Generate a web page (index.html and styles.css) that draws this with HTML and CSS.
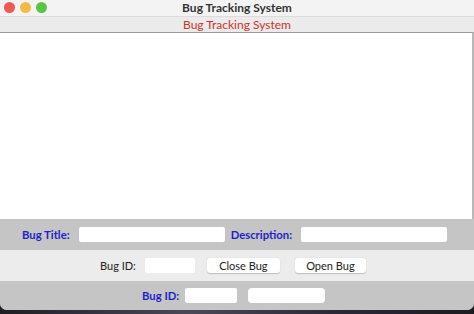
FILE: index.html
```html
<!DOCTYPE html>
<html>
<head>
<meta charset="utf-8">
<link rel="stylesheet" href="styles.css">
</head>
<body>
<div class="desk">
  <div class="window">
    <div class="titlebar">
      <div class="lights">
        <span class="light red"></span>
        <span class="light yellow"></span>
        <span class="light green"></span>
      </div>
      <div class="title">Bug Tracking System</div>
    </div>
    <div class="header">Bug Tracking System</div>
    <div class="textarea"></div>
    <div class="row row-gray row1">
      <span class="label blue">Bug Title:</span>
      <span class="field f-title"></span>
      <span class="label blue">Description:</span>
      <span class="field f-desc"></span>
    </div>
    <div class="row row-light row2">
      <span class="label">Bug ID:</span>
      <span class="field f-id"></span>
      <span class="btn b-close">Close Bug</span>
      <span class="btn b-open">Open Bug</span>
    </div>
    <div class="row row-gray row3">
      <span class="label blue">Bug ID:</span>
      <span class="field f-id2"></span>
      <span class="field f-wide"></span>
    </div>
  </div>
</div>
</body>
</html>
```
FILE: styles.css
```css
html, body {
  margin: 0;
  padding: 0;
}
body {
  width: 474px;
  height: 314px;
  overflow: hidden;
  background: #2a2a30;
  font-family: Lato, "Noto Sans", sans-serif;
}
.desk {
  width: 474px;
  height: 314px;
  background: linear-gradient(90deg, #1e1e24, #4a4a55 40%, #2a2a33 70%, #1c1c22);
}
.window {
  width: 474px;
  height: 310px;
  display: flex;
  flex-direction: column;
  border-radius: 0 0 7px 7px;
  overflow: hidden;
  background: #c5c5c5;
}
.titlebar {
  height: 16px;
  background: #f3f3f3;
  display: flex;
  align-items: center;
  position: relative;
}
.lights {
  display: flex;
  gap: 5px;
  padding-left: 4px;
  position: absolute;
  left: 0;
  top: 2px;
}
.light {
  width: 11px;
  height: 11px;
  border-radius: 50%;
  display: block;
}
.red { background: #ee5a52; }
.yellow { background: #f4bb40; }
.green { background: #5ac445; }
.title {
  flex: 1;
  text-align: center;
  font-size: 12px;
  font-weight: bold;
  color: #333;
  line-height: 16px;
}
.header {
  height: 15px;
  background: #ebebeb;
  border-top: 1px solid #dcdcdc;
  color: #cc3329;
  font-size: 12px;
  text-align: center;
  line-height: 15px;
}
.textarea {
  height: 186px;
  background: #fff;
  border-top: 1px solid #9a9a9a;
  border-right: 2px solid #b8b8b8;
}
.row {
  display: flex;
  align-items: center;
  padding-right: 2px;
  font-size: 11px;
}
.row-gray { background: #c5c5c5; }
.row-light { background: #ececec; }
.row1 { height: 31px; padding-left: 22px; }
.row2 { height: 31px; padding-left: 100px; }
.row3 { height: 29px; padding-left: 142px; }
.label { color: #222; }
.blue { color: #1f1fc8; font-weight: bold; font-size: 11.3px; }
.field {
  display: block;
  background: #fff;
  height: 15px;
  border-radius: 2px;
}
.f-title { width: 146px; margin-left: 9px; margin-right: 6px; }
.f-desc { width: 146px; margin-left: 9px; }
.f-id { width: 50px; margin-left: 9px; }
.f-id2 { width: 52px; margin-left: 6px; }
.f-wide { width: 77px; margin-left: 11px; border-radius: 4px; }
.btn {
  display: block;
  background: #fff;
  height: 15px;
  line-height: 15px;
  text-align: center;
  border-radius: 3px;
  color: #222;
  box-shadow: 0 0.5px 1px rgba(0,0,0,0.2);
}
.b-close { width: 73px; margin-left: 12px; }
.b-open { width: 71px; margin-left: 15px; }
```
